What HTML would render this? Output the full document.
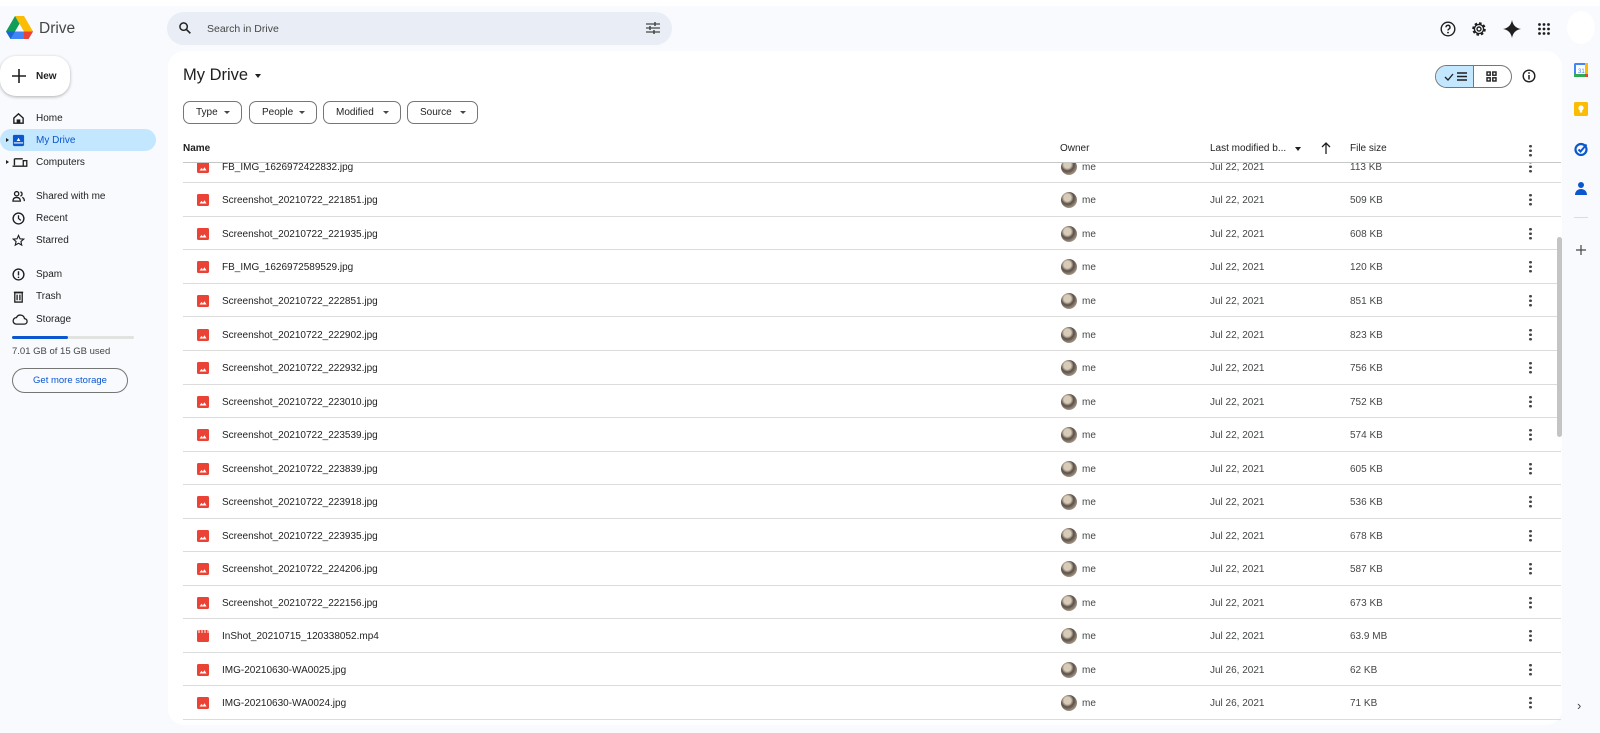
<!DOCTYPE html>
<html><head><meta charset="utf-8"><style>
*{box-sizing:border-box;margin:0;padding:0}
body{width:1600px;height:733px;overflow:hidden;background:#f8fafd;font-family:"Liberation Sans",Arial,sans-serif;color:#1f1f1f;position:relative}
.a{position:absolute}
.nav{position:absolute;left:36px;font-size:10px;color:#1f1f1f}
.ni{position:absolute;left:12px;width:13px;height:13px}
.chip{position:absolute;top:101px;height:23px;border:1px solid #747775;border-radius:7px;font-size:10px;line-height:21px;padding-left:12px;color:#1f1f1f}
.chip:after{content:"";position:absolute;right:11px;top:9px;border:3px solid transparent;border-top:3.5px solid #444746}
.row{position:absolute;left:0;width:1378px;height:33.54px;border-bottom:1px solid #dcdcdc;font-size:10px}
.row .ic{position:absolute;top:11px;width:12px;height:12px}
.row .nm{position:absolute;top:12px;color:#1f1f1f}
.row .av{position:absolute;top:9px;width:16px;height:16px;border-radius:50%;background:radial-gradient(circle at 40% 35%,#d8cbb8 0 25%,#5a5048 45%,#9a8c7c 70%,#e2d6c6 100%)}
.row .me{position:absolute;top:12px;color:#444746}
.row .dt{position:absolute;top:12px;color:#444746}
.row .sz{position:absolute;top:12px;color:#444746}
.row .dots{position:absolute;top:10px;width:3px;height:13px;background:radial-gradient(circle,#444746 1.3px,transparent 1.5px) 0 0/3px 4.5px repeat-y}
</style></head><body>
<div class="a" style="left:0;top:0;width:1600px;height:6px;background:#fff"></div>
<svg class="a" style="left:6px;top:16px" width="27" height="23" viewBox="0 0 27 23">
<path d="M9 0h9l9 15.5h-9z" fill="#fbbc04"/>
<path d="M4.5 15.5L0 15.5 4.5 23h18L27 15.5z" fill="#4285f4"/>
<path d="M0 15.5L9 0l4.5 7.7L9 15.5z" fill="#0f9d58"/>
<path d="M0 15.5h9L4.5 23z" fill="#1967d2"/>
<path d="M18 15.5h9L22.5 23H18z" fill="#ea4335"/>
</svg>
<div class="a" style="left:39px;top:20px;font-size:15.5px;color:#444746">Drive</div>
<div class="a" style="left:167px;top:12px;width:505px;height:33px;border-radius:17px;background:#e9eef6"></div>
<svg class="a" style="left:179px;top:22px" width="12" height="12" viewBox="0 0 13 13"><circle cx="5" cy="5" r="4" fill="none" stroke="#1f1f1f" stroke-width="1.6"/><path d="M8 8l4.3 4.3" stroke="#1f1f1f" stroke-width="1.7"/></svg>
<div class="a" style="left:207px;top:23px;font-size:10.5px;color:#444746">Search in Drive</div>
<svg class="a" style="left:646px;top:22px" width="14" height="12" viewBox="0 0 14 12"><path d="M0 2h14M0 6h14M0 10h14" stroke="#444746" stroke-width="1.3"/><path d="M9 0v4M4 4v4M8 8v4" stroke="#444746" stroke-width="1.5"/></svg>
<svg class="a" style="left:1440px;top:21px" width="16" height="16" viewBox="0 0 16 16"><circle cx="8" cy="8" r="6.8" fill="none" stroke="#1f1f1f" stroke-width="1.4"/><path d="M6 6.3a2 2 0 1 1 2.8 1.8c-.6.3-.8.7-.8 1.4" fill="none" stroke="#1f1f1f" stroke-width="1.4"/><circle cx="8" cy="11.6" r=".9" fill="#1f1f1f"/></svg>
<svg class="a" style="left:1471px;top:21px" width="16" height="16" viewBox="0 0 16 16"><circle cx="8" cy="8" r="5.5" fill="none" stroke="#1f1f1f" stroke-width="2.6" stroke-dasharray="2.4 1.9"/><circle cx="8" cy="8" r="4.6" fill="none" stroke="#1f1f1f" stroke-width="1.4"/><circle cx="8" cy="8" r="2" fill="none" stroke="#1f1f1f" stroke-width="1.4"/></svg>
<svg class="a" style="left:1503px;top:20px" width="18" height="18" viewBox="0 0 18 18"><path d="M9 0C9.8 5 13 8.2 18 9 13 9.8 9.8 13 9 18 8.2 13 5 9.8 0 9 5 8.2 8.2 5 9 0z" fill="#1f1f1f"/></svg>
<svg class="a" style="left:1538px;top:23px" width="12" height="12" viewBox="0 0 12 12" fill="#1f1f1f"><circle cx="1.5" cy="1.5" r="1.4"/><circle cx="6" cy="1.5" r="1.4"/><circle cx="10.5" cy="1.5" r="1.4"/><circle cx="1.5" cy="6" r="1.4"/><circle cx="6" cy="6" r="1.4"/><circle cx="10.5" cy="6" r="1.4"/><circle cx="1.5" cy="10.5" r="1.4"/><circle cx="6" cy="10.5" r="1.4"/><circle cx="10.5" cy="10.5" r="1.4"/></svg>
<div class="a" style="left:1567px;top:11px;width:28px;height:33px;border-radius:50%;background:#fff"></div>
<div class="a" style="left:0;top:56px;width:70px;height:40px;border-radius:16px;background:#fff;box-shadow:0 1px 3px rgba(0,0,0,.3)"></div>
<svg class="a" style="left:12px;top:69px" width="14" height="14" viewBox="0 0 14 14"><path d="M7 0v14M0 7h14" stroke="#1f1f1f" stroke-width="1.6"/></svg>
<div class="a" style="left:36px;top:71px;font-size:10px;font-weight:bold;color:#1f1f1f">New</div>
<div class="a" style="left:0;top:129px;width:156px;height:22px;border-radius:11px;background:#c2e7ff"></div>
<svg class="ni" style="top:112px" viewBox="0 0 14 14"><path d="M2 6.5L7 2l5 4.5V12H2z" fill="none" stroke="#1f1f1f" stroke-width="1.5"/><rect x="5" y="8" width="4" height="4" fill="#1f1f1f"/></svg>
<div class="nav" style="top:113px">Home</div>
<div class="a" style="left:6px;top:138px;border:2px solid transparent;border-left:3px solid #1f1f1f"></div>
<svg class="ni" style="top:134px" viewBox="0 0 14 14"><rect x="1" y="1" width="12" height="12" rx="1.5" fill="#0b57d0"/><rect x="2" y="9" width="10" height="1.2" fill="#fff"/><path d="M5 7.5L7 4l2 3.5z" fill="#fff"/></svg>
<div class="nav" style="top:135px;color:#0b57d0">My Drive</div>
<div class="a" style="left:6px;top:160px;border:2px solid transparent;border-left:3px solid #1f1f1f"></div>
<svg class="ni" style="top:156px;width:16px" viewBox="0 0 16 14"><path d="M2 3h9M2 3v7M0 11h11" fill="none" stroke="#1f1f1f" stroke-width="1.5"/><rect x="11.5" y="5" width="3.8" height="6" fill="none" stroke="#1f1f1f" stroke-width="1.4"/></svg>
<div class="nav" style="top:157px">Computers</div>
<svg class="ni" style="top:190px" viewBox="0 0 14 14"><circle cx="5" cy="4" r="2.3" fill="none" stroke="#1f1f1f" stroke-width="1.4"/><path d="M1 12c0-3 2-4 4-4s4 1 4 4z" fill="none" stroke="#1f1f1f" stroke-width="1.4"/><path d="M9 2a2.3 2.3 0 0 1 0 4.5M11 8c1.5.5 2.3 1.8 2.3 4" fill="none" stroke="#1f1f1f" stroke-width="1.4"/></svg>
<div class="nav" style="top:191px">Shared with me</div>
<svg class="ni" style="top:212px" viewBox="0 0 14 14"><circle cx="7" cy="7" r="5.8" fill="none" stroke="#1f1f1f" stroke-width="1.5"/><path d="M7 3.5V7l2.5 2" fill="none" stroke="#1f1f1f" stroke-width="1.4"/></svg>
<div class="nav" style="top:213px">Recent</div>
<svg class="ni" style="top:234px" viewBox="0 0 14 14"><path d="M7 1.5l1.6 3.7 4 .3-3 2.6.9 3.9L7 10 3.5 12l.9-3.9-3-2.6 4-.3z" fill="none" stroke="#1f1f1f" stroke-width="1.2"/></svg>
<div class="nav" style="top:235px">Starred</div>
<svg class="ni" style="top:268px" viewBox="0 0 14 14"><circle cx="7" cy="7" r="5.8" fill="none" stroke="#1f1f1f" stroke-width="1.5"/><path d="M7 3.5v4.5" stroke="#1f1f1f" stroke-width="1.5"/><circle cx="7" cy="10" r=".9" fill="#1f1f1f"/></svg>
<div class="nav" style="top:269px">Spam</div>
<svg class="ni" style="top:290px" viewBox="0 0 14 14"><path d="M3 3h8v10H3zM2 2.5h10M5.5 5v6M8.5 5v6" fill="none" stroke="#1f1f1f" stroke-width="1.4"/></svg>
<div class="nav" style="top:291px">Trash</div>
<svg class="ni" style="top:313px;width:16px" viewBox="0 0 16 14"><path d="M4 12h8.5a3 3 0 0 0 .3-6 4.5 4.5 0 0 0-8.6-1A3.5 3.5 0 0 0 4 12z" fill="none" stroke="#1f1f1f" stroke-width="1.4"/></svg>
<div class="nav" style="top:314px">Storage</div>
<div class="a" style="left:12px;top:336px;width:122px;height:3px;background:#e1e3e1;border-radius:2px"></div>
<div class="a" style="left:12px;top:336px;width:56px;height:3px;background:#0b57d0;border-radius:2px"></div>
<div class="a" style="left:12px;top:346px;font-size:9.5px;color:#444746">7.01 GB of 15 GB used</div>
<div class="a" style="left:12px;top:368px;width:116px;height:25px;border:1px solid #747775;border-radius:13px;font-size:9.5px;color:#0b57d0;text-align:center;line-height:23px">Get more storage</div>
<div class="a" style="left:168px;top:51px;width:1394px;height:674px;border-radius:16px;background:#fff"></div>
<div class="a" style="left:183px;top:66px;font-size:16.5px;color:#1f1f1f">My Drive</div>
<div class="a" style="left:255px;top:74px;border:3.5px solid transparent;border-top:4px solid #1f1f1f"></div>
<div class="chip" style="left:183px;width:59px">Type</div>
<div class="chip" style="left:249px;width:68px">People</div>
<div class="chip" style="left:323px;width:78px">Modified</div>
<div class="chip" style="left:407px;width:71px">Source</div>
<div class="a" style="left:1435px;top:65px;width:77px;height:23px;border:1px solid #747775;border-radius:12px;overflow:hidden">
<div style="position:absolute;left:0;top:0;width:38px;height:21px;background:#c2e7ff;border-right:1px solid #747775"></div></div>
<svg class="a" style="left:1444px;top:71px" width="26" height="11" viewBox="0 0 26 11"><path d="M1 6l3 3 5-6" fill="none" stroke="#1f1f1f" stroke-width="1.3"/><path d="M13 2h10M13 5.5h10M13 9h10" stroke="#1f1f1f" stroke-width="1.4"/></svg>
<svg class="a" style="left:1486px;top:71px" width="11" height="11" viewBox="0 0 11 11"><g fill="none" stroke="#1f1f1f" stroke-width="1.4"><rect x="1" y="1" width="3.2" height="3.2"/><rect x="6.8" y="1" width="3.2" height="3.2"/><rect x="1" y="6.8" width="3.2" height="3.2"/><rect x="6.8" y="6.8" width="3.2" height="3.2"/></g></svg>
<svg class="a" style="left:1522px;top:69px" width="14" height="14" viewBox="0 0 14 14"><circle cx="7" cy="7" r="5.8" fill="none" stroke="#1f1f1f" stroke-width="1.4"/><path d="M7 6v4.5" stroke="#1f1f1f" stroke-width="1.5"/><circle cx="7" cy="4" r=".9" fill="#1f1f1f"/></svg>
<div class="a" style="left:183px;top:143px;font-size:10px;font-weight:bold;color:#1f1f1f">Name</div>
<div class="a" style="left:1060px;top:143px;font-size:10px;color:#1f1f1f">Owner</div>
<div class="a" style="left:1210px;top:143px;font-size:10px;color:#1f1f1f">Last modified b...</div>
<div class="a" style="left:1295px;top:147px;border:3.5px solid transparent;border-top:4px solid #1f1f1f"></div>
<svg class="a" style="left:1321px;top:142px" width="10" height="12" viewBox="0 0 10 12"><path d="M5 12V1.5M1 5l4-4 4 4" fill="none" stroke="#1f1f1f" stroke-width="1.3"/></svg>
<div class="a" style="left:1350px;top:143px;font-size:10px;color:#1f1f1f">File size</div>
<div class="a" style="left:1529px;top:144px;width:3px;height:13px;background:radial-gradient(circle,#444746 1.3px,transparent 1.5px) 0 0/3px 4.5px repeat-y"></div>
<div class="a" style="left:183px;top:162px;width:1378px;height:1px;background:#c4c7c5"></div>
<div id="rows" class="a" style="left:183px;top:163px;width:1378px;height:558px;overflow:hidden"></div>
<div class="a" style="left:1557px;top:237px;width:5px;height:200px;border-radius:3px;background:#c4c4c4"></div>
<svg class="a" style="left:1574px;top:63px" width="14" height="14" viewBox="0 0 14 14"><rect width="14" height="14" rx="1.5" fill="#4285f4"/><rect x="2" y="2" width="10" height="10" fill="#fff"/><rect x="0" y="11" width="11" height="3" fill="#34a853"/><rect x="11" y="0" width="3" height="11" fill="#fbbc04"/><rect x="11" y="11" width="3" height="3" fill="#ea4335"/><text x="4" y="10" font-size="6" fill="#4285f4" font-family="Liberation Sans">31</text></svg>
<svg class="a" style="left:1574px;top:102px" width="14" height="14" viewBox="0 0 14 14"><rect width="14" height="14" rx="1.5" fill="#fbbc04"/><circle cx="7" cy="6" r="2.6" fill="#fff"/><rect x="5.8" y="8.5" width="2.4" height="2" fill="#fff"/></svg>
<svg class="a" style="left:1574px;top:142px" width="14" height="14" viewBox="0 0 14 14"><circle cx="7" cy="7.5" r="5.5" fill="none" stroke="#0b57d0" stroke-width="2.2"/><path d="M4.5 7.5l2 2 6-7" fill="none" stroke="#0b57d0" stroke-width="2"/></svg>
<svg class="a" style="left:1575px;top:181px" width="12" height="14" viewBox="0 0 12 14"><circle cx="6" cy="4" r="3" fill="#0b57d0"/><path d="M0 14c0-4 3-6 6-6s6 2 6 6z" fill="#0b57d0"/></svg>
<div class="a" style="left:1574px;top:217px;width:14px;height:1px;background:#dadce0"></div>
<svg class="a" style="left:1576px;top:245px" width="10" height="10" viewBox="0 0 10 10"><path d="M5 0v10M0 5h10" stroke="#444746" stroke-width="1.2"/></svg>
<div class="a" style="left:1577px;top:698px;font-size:13px;color:#444746">›</div>
<script>
var r=[["FB_IMG_1626972422832.jpg","Jul 22, 2021","113 KB"],["Screenshot_20210722_221851.jpg","Jul 22, 2021","509 KB"],["Screenshot_20210722_221935.jpg","Jul 22, 2021","608 KB"],["FB_IMG_1626972589529.jpg","Jul 22, 2021","120 KB"],["Screenshot_20210722_222851.jpg","Jul 22, 2021","851 KB"],["Screenshot_20210722_222902.jpg","Jul 22, 2021","823 KB"],["Screenshot_20210722_222932.jpg","Jul 22, 2021","756 KB"],["Screenshot_20210722_223010.jpg","Jul 22, 2021","752 KB"],["Screenshot_20210722_223539.jpg","Jul 22, 2021","574 KB"],["Screenshot_20210722_223839.jpg","Jul 22, 2021","605 KB"],["Screenshot_20210722_223918.jpg","Jul 22, 2021","536 KB"],["Screenshot_20210722_223935.jpg","Jul 22, 2021","678 KB"],["Screenshot_20210722_224206.jpg","Jul 22, 2021","587 KB"],["Screenshot_20210722_222156.jpg","Jul 22, 2021","673 KB"],["InShot_20210715_120338052.mp4","Jul 22, 2021","63.9 MB"],["IMG-20210630-WA0025.jpg","Jul 26, 2021","62 KB"],["IMG-20210630-WA0024.jpg","Jul 26, 2021","71 KB"]];
var h="";
for(var i=0;i<r.length;i++){var t=(-13.2+33.54*i).toFixed(2);var v=r[i][0].indexOf(".mp4")>0;
h+='<div class="row" style="top:'+t+'px"><svg class="ic" viewBox="0 0 12 12" style="left:14px">'+(v?'<rect width="12" height="12" rx="1.5" fill="#ea4335"/><path d="M2 0v3M5 0v3M8 0v3M11 0v3" stroke="#fff" stroke-width="1"/>':'<rect width="12" height="12" rx="1.5" fill="#ea4335"/><path d="M2.5 9.5l2-2.6 1.4 1.6 1.6-2.2 2 3.2z" fill="#fff"/>')+'</svg><div class="nm" style="left:39px">'+r[i][0]+'</div><div class="av" style="left:878px"></div><div class="me" style="left:899px">me</div><div class="dt" style="left:1027px">'+r[i][1]+'</div><div class="sz" style="left:1167px">'+r[i][2]+'</div><div class="dots" style="left:1346px"></div></div>';}
document.getElementById("rows").innerHTML=h;
</script>
</body></html>
